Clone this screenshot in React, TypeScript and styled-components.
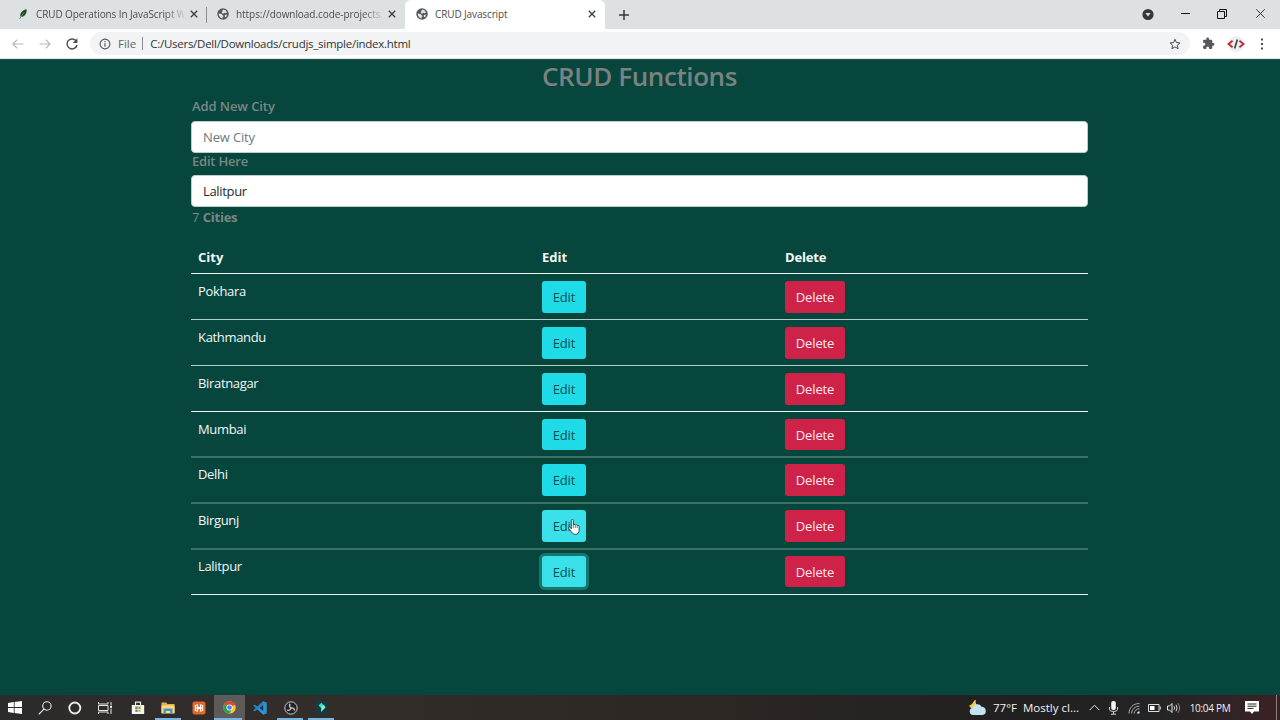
import React from "react";
import styled, { createGlobalStyle, css } from "styled-components";

const Global = createGlobalStyle`
  * { box-sizing: border-box; }
  html, body { margin: 0; padding: 0; overflow: hidden; }
  body { font-family: "Open Sans", "Noto Sans", sans-serif; }
`;

const Screen = styled.div`
  width: 1280px;
  height: 720px;
  display: flex;
  flex-direction: column;
  overflow: hidden;
  background: #07463d;
`;

const Label = styled.span<{ $size?: number; $track?: number; $color?: string; $weight?: number }>`
  font-size: ${(p) => p.$size ?? 13}px;
  letter-spacing: ${(p) => p.$track ?? 0}px;
  color: ${(p) => p.$color ?? "inherit"};
  font-weight: ${(p) => p.$weight ?? 400};
  white-space: pre;
`;

/* Browser chrome */

const TabStrip = styled.div`
  height: 29px;
  flex: none;
  display: flex;
  background: #dde1e4;
  color: #4a4d50;
`;

const Tab = styled.div<{ $width: number; $left?: number; $active?: boolean; $divider?: boolean }>`
  width: ${(p) => p.$width}px;
  height: 29px;
  display: flex;
  align-items: center;
  padding: 0 9px 1px ${(p) => p.$left ?? 11}px;
  ${(p) => p.$divider && css`background: linear-gradient(#8b8f93, #8b8f93) right 7px / 1px 16px no-repeat;`}
  ${(p) =>
    p.$active &&
    css`
      background: #fff;
      border-radius: 6px 6px 0 0;
    `}
`;

const TabTitle = styled.div<{ $fade?: boolean }>`
  flex: 1;
  min-width: 0;
  margin-left: 7px;
  margin-right: 6px;
  line-height: 16px;
  display: flex;
  ${(p) => p.$fade && css`mask-image: linear-gradient(90deg, #000 calc(100% - 20px), rgba(0, 0, 0, 0.15));`}
`;

const NewTab = styled.div`
  width: 37px;
  display: flex;
  align-items: center;
  justify-content: center;
`;

const WindowControls = styled.div`
  margin-left: auto;
  display: flex;
  align-items: center;
  height: 27px;
`;

const ControlCell = styled.div<{ $width: number }>`
  width: ${(p) => p.$width}px;
  height: 100%;
  display: flex;
  align-items: center;
  justify-content: center;
`;

const Toolbar = styled.div`
  height: 30px;
  flex: none;
  display: flex;
  align-items: center;
  background: #fff;
  padding: 0 2px 0 4px;
  border-bottom: 1px solid #dfe5e5;
`;

const Omnibox = styled.div`
  flex: 1;
  height: 23px;
  border-radius: 12px;
  background: #f1f3f4;
  display: flex;
  align-items: center;
  padding: 0 9px;
  color: #303336;
`;

const OmniDivider = styled.div`
  width: 1px;
  height: 13px;
  margin: 0 7px 0 6px;
  background: #8b8f93;
`;

const UrlText = styled.div`
  flex: 1;
  line-height: 16px;
  display: flex;
`;

/* Page */

const Page = styled.main`
  flex: 1;
  min-height: 0;
  padding: 0 192px 0 191px;
  display: flex;
  flex-direction: column;
  border-top: 1px solid #1b574e;
  color: #f3f8f7;
`;

const Heading = styled.h1`
  height: 37px;
  flex: none;
  margin: 0;
  text-align: center;
  font-size: 26px;
  line-height: 32px;
  font-weight: 600;
  color: #7b8281;
  letter-spacing: -0.4px;
`;

const FieldLabel = styled.label<{ $height: number; $line: number }>`
  height: ${(p) => p.$height}px;
  flex: none;
  line-height: ${(p) => p.$line}px;
  padding-left: 1px;
  color: #7b8784;
  display: block;
`;

const Field = styled.div<{ $filled?: boolean }>`
  height: 32px;
  flex: none;
  display: flex;
  align-items: center;
  padding: 0 11px;
  border: 1px solid #b9d0cb;
  border-radius: 4px;
  background: #fff;
  color: ${(p) => (p.$filled ? "#24292c" : "#70777d")};
`;

const rowGrid = css`
  display: grid;
  grid-template-columns: 344px 243px 1fr;
  padding-left: 7px;
  flex: none;
`;

const HeadRow = styled.div`
  ${rowGrid}
  height: 37px;
  line-height: 20px;
  padding-top: 10px;
  border-bottom: 1px solid #eef6f4;
`;

const Row = styled.div<{ $height: number; $top: number; $line: string; $thick: number }>`
  ${rowGrid}
  height: ${(p) => p.$height}px;
  padding-top: ${(p) => p.$top}px;
  border-bottom: ${(p) => p.$thick}px solid ${(p) => p.$line};
`;

const CityCell = styled.div`
  line-height: 18px;
`;

const Button = styled.button<{ $kind: "edit" | "delete"; $short?: boolean; $state?: "hover" | "focus" }>`
  width: ${(p) => (p.$kind === "edit" ? 44 : 60)}px;
  height: ${(p) => (p.$short ? 31 : 32)}px;
  padding: 0;
  border: 0;
  border-radius: 3px;
  font: inherit;
  display: flex;
  align-items: center;
  justify-content: center;
  color: ${(p) => (p.$kind === "edit" ? "#0c4d52" : "#fbe9ed")};
  background: ${(p) => (p.$kind === "delete" ? "#ce2248" : p.$state ? "#3ae0ea" : "#1fdbe8")};
  ${(p) => p.$state === "focus" && css`box-shadow: 0 0 0 3px #16776f;`}
`;

const ButtonSlot = styled.div`
  position: relative;
`;

const Pointer = styled.svg`
  position: absolute;
  left: 26px;
  top: 9px;
`;

/* Taskbar */

const Taskbar = styled.footer`
  height: 25px;
  flex: none;
  display: flex;
  background: linear-gradient(90deg, #2b2b2b 0, #332d2a 25%, #2d2723 55%, #211f20 80%, #232425 90%, #3a2224 100%);
  color: #f2f2f2;
`;

const Task = styled.div<{ $open?: boolean; $current?: boolean; $wide?: boolean }>`
  width: ${(p) => (p.$wide ? 30.67 : 30)}px;
  display: flex;
  align-items: center;
  justify-content: center;
  background: ${(p) => (p.$current ? "#5d5a59" : "transparent")};
  ${(p) =>
    p.$open &&
    css`
      border-bottom: 2px solid #77b5e0;
      border-image: linear-gradient(90deg, transparent ${p.$current ? 0 : 3}px, #77b5e0 ${p.$current ? 0 : 3}px, #77b5e0 27px, transparent 27px) 1;
      padding-top: 2px;
    `}
`;

const TaskGap = styled.div`
  width: 2.2px;
`;

const Tray = styled.div`
  width: 315px;
  margin-left: auto;
  display: flex;
`;

const TrayCell = styled.div<{ $width: number; $left?: boolean }>`
  width: ${(p) => p.$width}px;
  display: flex;
  align-items: center;
  justify-content: ${(p) => (p.$left ? "flex-start" : "center")};
  padding-left: ${(p) => (p.$left ? 4 : 0)}px;
`;

const ShowDesktop = styled.div`
  width: 1px;
  margin-left: 8px;
  background: #8c8080;
`;

const Globe = () => (
  <svg width="12" height="12" viewBox="0 0 24 24">
    <circle cx="12" cy="12" r="11.5" fill="#54585c" />
    <path d="M3 11l6 1 3 3 1 2-2 1v3.500l-4-2.500-3-4zM12 3l5 1.500 3 4.500-3 1.500-3-1-1.500 2-3-1.500 1-3z" fill="#e3e6e8" />
    <path d="M15.500 14l4.500-1-1 3.500-3 2.500z" fill="#e3e6e8" />
  </svg>
);

const Cross = () => (
  <svg width="8" height="8" viewBox="0 0 8 8">
    <path d="M.8.8l6.4 6.4M7.2.8L.8 7.2" stroke="#3b3e41" strokeWidth="1.3" />
  </svg>
);

const Leaf = () => (
  <svg width="12" height="12" viewBox="0 0 12 12">
    <path d="M9.600 1.200C6 1.800 3.200 4.300 3.200 8.200l1.600.8C8 8 10 5 9.600 1.200z" fill="#1d4a22" />
    <path d="M2.500 11L7 4.500" stroke="#5f9a4c" strokeWidth="1" />
  </svg>
);

const BrowserTop = () => (
  <>
    <TabStrip>
      <Tab $width={207} $left={17} $divider>
        <Leaf />
        <TabTitle $fade>
          <Label $size={10} $track={-0.1}>CRUD Operations In JavaScript W</Label>
        </TabTitle>
        <Cross />
      </Tab>
      <Tab $width={198} $left={10}>
        <Globe />
        <TabTitle $fade>
          <Label $size={10} $track={-0.06}>https://download.code-projects.c</Label>
        </TabTitle>
        <Cross />
      </Tab>
      <Tab $width={200} $active>
        <Globe />
        <TabTitle>
          <Label $size={10} $track={-0.12}>CRUD Javascript</Label>
        </TabTitle>
        <Cross />
      </Tab>
      <NewTab>
        <svg width="10" height="10" viewBox="0 0 10 10">
          <path d="M5 0v10M0 5h10" stroke="#35383b" strokeWidth="1.5" />
        </svg>
      </NewTab>
      <WindowControls>
        <ControlCell $width={37}>
          <svg width="12" height="12" viewBox="0 0 12 12">
            <circle cx="6" cy="6.5" r="5.6" fill="#36393c" />
            <path d="M3.4 5h5.2L6 8.4z" fill="#dde1e4" />
          </svg>
        </ControlCell>
        <ControlCell $width={38}>
          <svg width="9" height="9" viewBox="0 0 9 9">
            <path d="M0 4.500h9" stroke="#111" />
          </svg>
        </ControlCell>
        <ControlCell $width={36}>
          <svg width="10" height="10" viewBox="0 0 10 10">
            <path d="M2.500 2V.5h7v7H8M.5 2.500h7v7h-7z" fill="none" stroke="#111" />
          </svg>
        </ControlCell>
        <ControlCell $width={40}>
          <svg width="9" height="9" viewBox="0 0 9 9">
            <path d="M.3.3l8.400 8.400M8.700.3L.3 8.700" stroke="#222" strokeWidth=".9" />
          </svg>
        </ControlCell>
      </WindowControls>
    </TabStrip>
    <Toolbar>
      <ControlCell $width={27}>
        <svg width="12" height="10" viewBox="0 0 12 10">
          <path d="M11.500 5H1M5.200.7L1 5l4.200 4.300" fill="none" stroke="#b4b7ba" strokeWidth="1.200" />
        </svg>
      </ControlCell>
      <ControlCell $width={27}>
        <svg width="12" height="10" viewBox="0 0 12 10">
          <path d="M.5 5H11M6.800.7L11 5 6.800 9.300" fill="none" stroke="#b4b7ba" strokeWidth="1.200" />
        </svg>
      </ControlCell>
      <ControlCell $width={28}>
        <svg width="12" height="12" viewBox="0 0 12 12">
          <path d="M10.300 3.200A5 5 0 1 0 11 7" fill="none" stroke="#4b4e51" strokeWidth="1.400" />
          <path d="M11.400.3v4.600H6.800z" fill="#4b4e51" />
        </svg>
      </ControlCell>
      <ControlCell $width={4} />
      <Omnibox>
        <svg width="12" height="12" viewBox="0 0 12 12">
          <circle cx="6" cy="6" r="4.900" fill="none" stroke="#54585c" strokeWidth="1.100" />
          <path d="M6 5.200v3.600M6 3v1.300" stroke="#54585c" strokeWidth="1.200" />
        </svg>
        <ControlCell $width={7} />
        <Label $size={11.5} $color="#62666a">File</Label>
        <OmniDivider />
        <UrlText>
          <Label $size={11.5} $track={-0.26}>C:/Users/Dell/Downloads/crudjs_simple/index.html</Label>
        </UrlText>
        <svg width="12" height="12" viewBox="0 0 24 24">
          <path d="M12 2.500l2.900 6.600 7.100.7-5.400 4.700 1.600 7L12 17.800l-6.200 3.700 1.600-7L2 9.800l7.100-.7z" fill="none" stroke="#4b4e51" strokeWidth="2" />
        </svg>
      </Omnibox>
      <ControlCell $width={36}>
        <svg width="13" height="13" viewBox="0 0 24 24">
          <path d="M20.500 11H19V7a2 2 0 0 0-2-2h-4V3.500a2.500 2.500 0 0 0-5 0V5H4a2 2 0 0 0-2 2v3.800h1.500a2.700 2.700 0 0 1 0 5.400H2V20a2 2 0 0 0 2 2h3.800v-1.500a2.700 2.700 0 0 1 5.400 0V22H17a2 2 0 0 0 2-2v-4h1.500a2.500 2.500 0 0 0 0-5z" fill="#54585c" />
        </svg>
      </ControlCell>
      <ControlCell $width={19}>
        <svg width="18" height="16" viewBox="0 0 18 16">
          <circle cx="9" cy="8" r="8" fill="#eceef0" />
          <path d="M5.600 4.800L1.500 8l4.100 3.200M12.400 4.800L16.500 8l-4.100 3.200" fill="none" stroke="#c22b35" strokeWidth="1.900" />
          <path d="M10.400 3.500L7.600 12.500" stroke="#274f57" strokeWidth="1.700" />
        </svg>
      </ControlCell>
      <ControlCell $width={33}>
        <svg width="4" height="12" viewBox="0 0 4 12">
          <path d="M1 .5h2v2H1zM1 5h2v2H1zM1 9.500h2v2H1z" fill="#4b4e51" />
        </svg>
      </ControlCell>
    </Toolbar>
  </>
);

type RowData = {
  city: string;
  top: number;
  line: string;
  thick: number;
  height?: number;
  short?: boolean;
  state?: "hover" | "focus";
};

const rows: RowData[] = [
  { city: "Pokhara", top: 7, line: "#b5cdc8", thick: 1 },
  { city: "Kathmandu", top: 7, line: "#b5cdc8", thick: 1 },
  { city: "Biratnagar", top: 7, line: "#eef4f3", thick: 1 },
  { city: "Mumbai", top: 7, line: "#3c7168", thick: 2, short: true },
  { city: "Delhi", top: 6, line: "#3c7168", thick: 2 },
  { city: "Birgunj", top: 6, line: "#3c7168", thick: 2, state: "hover" },
  { city: "Lalitpur", top: 6, line: "#e6efee", thick: 1, height: 45, short: true, state: "focus" },
];

const CrudPage = () => (
  <Page>
    <Heading>CRUD Functions</Heading>
    <FieldLabel $height={24} $line={17}>
      <Label $weight={600} $track={-0.08}>Add New City</Label>
    </FieldLabel>
    <Field>
      <Label $track={-0.15}>New City</Label>
    </Field>
    <FieldLabel $height={22} $line={15}>
      <Label $weight={600} $track={-0.2}>Edit Here</Label>
    </FieldLabel>
    <Field $filled>
      <Label $track={-0.33}>Lalitpur</Label>
    </Field>
    <FieldLabel $height={30} $line={18}>
      <Label>7 </Label>
      <Label $weight={700} $track={-0.25}>Cities</Label>
    </FieldLabel>
    <HeadRow>
      <Label $weight={700}>City</Label>
      <Label $weight={700}>Edit</Label>
      <Label $weight={700} $track={-0.15}>Delete</Label>
    </HeadRow>
    {rows.map((r) => (
      <Row key={r.city} $height={r.height ?? 46} $top={r.top} $line={r.line} $thick={r.thick}>
        <CityCell>
          <Label $track={-0.33}>{r.city}</Label>
        </CityCell>
        <ButtonSlot>
          <Button $kind="edit" $state={r.state} $short={r.short}>
            <Label $track={-0.1}>Edit</Label>
          </Button>
          {r.state === "hover" && (
            <Pointer width="12" height="16" viewBox="0 0 12 16">
              <path
                d="M3.300 9.800V1.600c0-1.500 2-1.500 2 0v4.300c.3-.8 1.800-.8 2 .3.400-.7 1.700-.5 1.900.4.500-.6 1.900-.4 1.900.9v3.700c0 2.500-1.200 4.100-3.500 4.100-2 0-3.100-.7-4-2.300L.8 9.400c-.6-1.200 1-1.800 1.600-.9z"
                fill="#fff"
                stroke="#1b2a2b"
                strokeWidth=".8"
              />
              <path d="M5.300 6v3M7.300 6.500V9M9.200 7v2" stroke="#1b2a2b" strokeWidth=".6" />
            </Pointer>
          )}
        </ButtonSlot>
        <Button $kind="delete" $short={r.short}>
          <Label $track={-0.1}>Delete</Label>
        </Button>
      </Row>
    ))}
  </Page>
);

const SystemBar = () => (
  <Taskbar>
    <Task>
      <svg width="14" height="13" viewBox="0 0 14 13">
        <path d="M0 1.900L5.800 1v5H0zM6.600.9L14 0v6H6.600zM0 6.900h5.800v5L0 11.100zM6.600 6.900H14V13l-7.400-1z" fill="#fff" />
      </svg>
    </Task>
    <Task>
      <svg width="14" height="14" viewBox="0 0 14 14">
        <circle cx="8.900" cy="5" r="4.200" fill="none" stroke="#e8e8e8" strokeWidth="1.100" />
        <path d="M5.900 8.200L.8 13.300" stroke="#e8e8e8" strokeWidth="1.200" />
      </svg>
    </Task>
    <Task>
      <svg width="14" height="14" viewBox="0 0 14 14">
        <circle cx="6.800" cy="7" r="5.500" fill="none" stroke="#f2f2f2" strokeWidth="1.800" />
      </svg>
    </Task>
    <Task>
      <svg width="15" height="14" viewBox="0 0 15 14">
        <path d="M.5 1v2h9.500V1M.5 13v-2h9.500v2M.5 4.500h9.500v5H.5zM13 1v3M13 7.500V13" fill="none" stroke="#e4e4e4" />
        <path d="M12 4.800h2v2h-2z" fill="#fff" />
      </svg>
    </Task>
    <TaskGap />
    <Task $wide>
      <svg width="14" height="14" viewBox="0 0 14 14">
        <path d="M4.500 4V1.200h5V4" fill="none" stroke="#e8e8e8" strokeWidth="1.200" />
        <path d="M.8 4h12.400v9H.8z" fill="#f4f4f4" />
        <path d="M4.300 5.500h2.400v2.400H4.300z" fill="#e0543a" />
        <path d="M7.300 5.500h2.400v2.400H7.300z" fill="#78b23a" />
        <path d="M4.300 8.500h2.400v2.400H4.300z" fill="#3196d8" />
        <path d="M7.300 8.500h2.400v2.400H7.300z" fill="#e9b52f" />
      </svg>
    </Task>
    <Task $wide $open>
      <svg width="14" height="12" viewBox="0 0 14 12">
        <path d="M.5.5h4.800l1 1.500h7.200v9H.5z" fill="#e5b73f" />
        <path d="M.5 3.500h13v8H.5z" fill="#f7dc85" />
        <path d="M2.500 11.500V6.500h9v5H9.200V9H4.800v2.500z" fill="#4b93c9" />
      </svg>
    </Task>
    <Task $wide>
      <svg width="14" height="14" viewBox="0 0 14 14">
        <rect x=".5" y=".5" width="13" height="13" rx="2" fill="#e0672c" />
        <path d="M4 4h1.500v2.500h3V4H10M4 10h1.500V7.500h3V10H10" fill="none" stroke="#fff" strokeWidth="1.200" />
        <path d="M3.300 4v2l.9 1-.9 1v2M10.700 4v2l-.9 1 .9 1v2" fill="none" stroke="#fff" strokeWidth="1.200" />
      </svg>
    </Task>
    <Task $wide $open $current>
      <svg width="13" height="13" viewBox="0 0 24 24">
        <circle cx="12" cy="12" r="11.500" fill="#f3c730" />
        <path d="M12 12L2 6.200A11.500 11.500 0 0 1 22 6.300z" fill="#df4537" />
        <path d="M2 6.200A11.500 11.500 0 0 0 11.500 23.500L16.500 14.500 12 12z" fill="#2f9e52" />
        <path d="M12 6.500h10.100" stroke="#df4537" strokeWidth="2" />
        <circle cx="12" cy="12" r="5.600" fill="#fff" />
        <circle cx="12" cy="12" r="4.300" fill="#4486ee" />
      </svg>
    </Task>
    <Task $wide>
      <svg width="14" height="14" viewBox="0 0 24 24">
        <path d="M17.500.5L23.500 3.200v17.600l-6 2.700L7.300 14l-4.600 3.500L.5 16.300 5.200 12 .5 7.700 2.700 6.500l4.600 3.500zM17.500 7L11 12l6.500 5z" fill="#2c95da" fillRule="evenodd" />
        <path d="M2.700 17.500l-2.200-1.200L17.500.5V7z" fill="#1f82c6" />
      </svg>
    </Task>
    <Task $wide $open>
      <svg width="14" height="14" viewBox="0 0 14 14">
        <circle cx="7" cy="7" r="6.200" fill="#25232a" stroke="#c8c8c8" strokeWidth="1" />
        <path d="M6.300 2.800C5 4.200 5.400 6 7 7c1.900-.5 3.400.6 3.600 2.600M7 7c-.4 1.900-2.200 2.800-3.900 2" fill="none" stroke="#c8c8c8" strokeWidth="1.300" />
      </svg>
    </Task>
    <Task $wide $open>
      <svg width="13" height="13" viewBox="0 0 13 13">
        <rect width="13" height="13" rx="1" fill="#173a42" />
        <path d="M6.300 1.800L9 4.500 6.300 7.200 3.600 4.500z" fill="#3fe0bd" />
        <path d="M6.300 6L9 3.800l1.500 2.700-4.500 4.600z" fill="#7df3d2" />
      </svg>
    </Task>
    <Tray>
      <TrayCell $width={24}>
        <svg width="19" height="17" viewBox="0 0 19 17">
          <path d="M8 .8C4.500 2 5 6.500 1.200 6.300 1.500 10 8 11 10.200 7 8 6 7 3.500 8 .8z" fill="#f4cd45" />
          <path d="M5 16a3.700 3.700 0 0 1-.3-7.300 4.800 4.800 0 0 1 8.800-1A4.200 4.200 0 0 1 14.500 16z" fill="#c4e3f2" />
        </svg>
      </TrayCell>
      <TrayCell $width={95} $left>
        <Label $size={11.5}>77°F  Mostly cl...</Label>
      </TrayCell>
      <TrayCell $width={20}>
        <svg width="11" height="7" viewBox="0 0 11 7">
          <path d="M.6 6.200l4.900-5 4.900 5" fill="none" stroke="#e8e8e8" />
        </svg>
      </TrayCell>
      <TrayCell $width={19}>
        <svg width="9" height="14" viewBox="0 0 9 14">
          <rect x="2.200" y="0" width="4.600" height="9" rx="2" fill="#f4f4f4" />
          <path d="M.5 6v2.500c0 2.500 8 2.500 8 0V6M4.500 10.500V13M2 13.200h5" fill="none" stroke="#d8d8d8" />
        </svg>
      </TrayCell>
      <TrayCell $width={21}>
        <svg width="12" height="12" viewBox="0 0 12 12">
          <path d="M1 11.500C1 6 5 1.500 11.500 1.500M3.600 11.500C3.600 7.500 7 4.200 11.500 4.200M6.200 11.500c0-2.500 2.300-4.700 5.300-4.700" fill="none" stroke="#a9a9a9" />
          <path d="M9 11.500c0-1 1-2.200 2.500-2.200v2.200z" fill="#eee" />
        </svg>
      </TrayCell>
      <TrayCell $width={20}>
        <svg width="13" height="8" viewBox="0 0 13 8">
          <path d="M.5.5h10.500v7H.5zM12.300 2.500v3" fill="none" stroke="#ddd" />
          <path d="M2 2h4.500v4H2z" fill="#fff" />
        </svg>
      </TrayCell>
      <TrayCell $width={20}>
        <svg width="14" height="12" viewBox="0 0 14 12">
          <path d="M.5 4h2L5 1.500v9L2.500 8h-2z" fill="none" stroke="#e4e4e4" />
          <path d="M7 4.200q1.200 1.800 0 3.600M9 2.700q2.200 3.300 0 6.600" fill="none" stroke="#ddd" />
          <path d="M11 1.200q3.200 4.800 0 9.600" fill="none" stroke="#888" />
        </svg>
      </TrayCell>
      <TrayCell $width={52}>
        <Label $size={10} $track={-0.3}>10:04 PM</Label>
      </TrayCell>
      <TrayCell $width={32}>
        <svg width="14" height="13" viewBox="0 0 14 13">
          <path d="M0 0h14v10.500H9L7 13l-2-2.500H0z" fill="#fff" />
          <path d="M2.500 3h9M2.500 5.200h9M2.500 7.400h6" stroke="#2a2526" />
        </svg>
      </TrayCell>
      <ShowDesktop />
    </Tray>
  </Taskbar>
);

export default function App() {
  return (
    <Screen>
      <Global />
      <BrowserTop />
      <CrudPage />
      <SystemBar />
    </Screen>
  );
}
